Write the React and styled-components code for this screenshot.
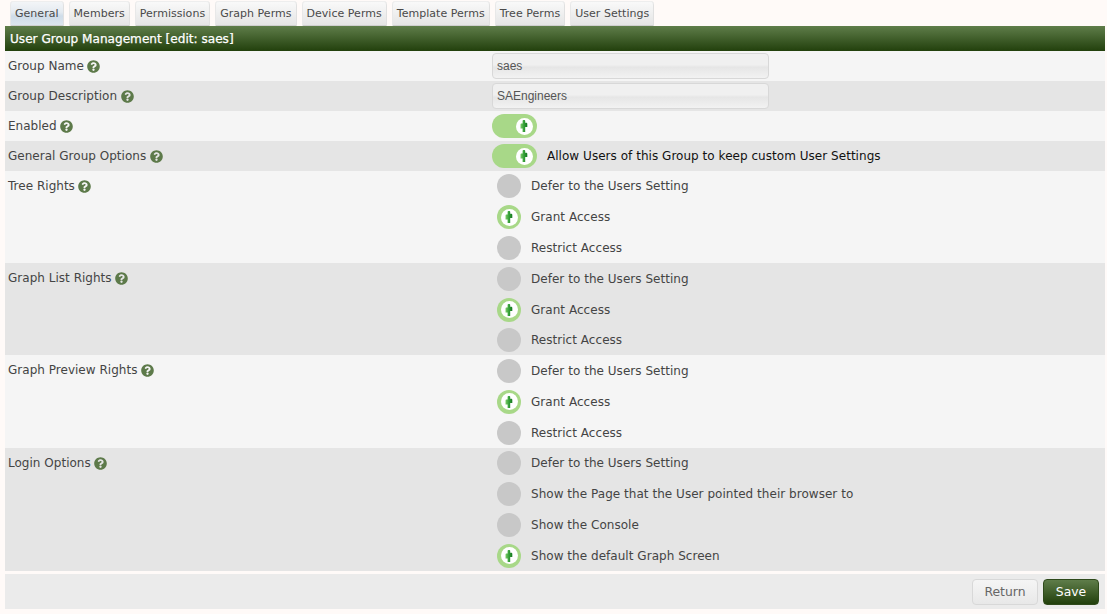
import React from "react";
import styled, { createGlobalStyle } from "styled-components";
import { FaQuestionCircle } from "react-icons/fa";

const Global = createGlobalStyle`
  html, body { margin: 0; padding: 0; background: #fffaf8; }
  body { font-family: Verdana, "DejaVu Sans", sans-serif; font-size: 12px; color: #444; }
`;

const Page = styled.div`
  width: 1100px;
  height: 614px;
  padding-left: 5px;
`;

const Tabs = styled.nav`
  display: flex;
  gap: 5px;
  height: 26px;
  padding-left: 5px;
  align-items: flex-end;
`;

const Tab = styled.div`
  height: 25px;
  box-sizing: border-box;
  padding: 0 5px;
  display: flex;
  align-items: center;
  font-size: 11px;
  letter-spacing: 0.03px;
  color: #4a4a4a;
  border-radius: 4px 4px 0 0;
  box-shadow: inset 0 1px 0 #eee, inset 1px 0 0 #e8e8e8, inset -1px 0 0 #e0e0e0, inset 0 -1px 0 #cfcfcf;
  background: ${(p) =>
    p.$active
      ? "linear-gradient(to bottom, #f4f6f8 0%, #e4eaf0 45%, #cfdce8 60%, #dde6ee 100%)"
      : "linear-gradient(to bottom, #fafafa 0%, #e4e4e4 100%)"};
`;

const Heading = styled.div`
  height: 25px;
  display: flex;
  align-items: center;
  padding-left: 5px;
  color: #fff;
  font-size: 12.1px;
  -webkit-text-stroke: 0.25px #fff;
  background: linear-gradient(to bottom, #5f7d4a 0%, #22400c 100%);
`;

const Row = styled.div`
  display: grid;
  grid-template-columns: 487px 1fr;
  height: ${(p) => p.$height || 30}px;
  background: ${(p) => (p.$alt ? "#e5e5e5" : "#f5f5f5")};
`;

const Label = styled.div`
  display: flex;
  align-items: center;
  align-self: start;
  gap: 3.5px;
  height: 30px;
  padding-left: 3px;
  letter-spacing: 0.02px;
  color: #444;
`;

const HelpIcon = styled(FaQuestionCircle)`
  width: 13px;
  height: 13px;
  flex: none;
  color: #5d7a4a;
`;

const Field = styled.div`
  display: flex;
  align-items: center;
  gap: 10px;
  height: 30px;
`;

const Text = styled.div`
  box-sizing: border-box;
  width: 277px;
  height: 26px;
  padding-left: 4px;
  display: flex;
  align-items: center;
  color: #555;
  font-family: "Liberation Sans", Arial, sans-serif;
  font-size: 12px;
  border: 1px solid #d8d8d8;
  border-radius: 4px;
  background: linear-gradient(to bottom, #f0f0f0 0 45%, #e6e6e6 55%, #f2f2f2 100%);
`;

const Switch = styled.div`
  width: 45px;
  height: 24px;
  border-radius: 12px;
  background: #a8d888;
  display: flex;
  align-items: center;
  justify-content: flex-end;
  padding-right: 4px;
  box-sizing: border-box;
`;

const Knob = styled.div`
  width: 17px;
  height: 17px;
  border-radius: 50%;
  background: #fff;
  display: flex;
  align-items: center;
  justify-content: center;
`;

const Options = styled.div`
  display: flex;
  flex-direction: column;
  padding-top: ${(p) => p.$nudge}px;
`;

const Option = styled.div`
  height: 30.75px;
  flex: none;
  display: flex;
  align-items: center;
  gap: 10px;
  padding-left: 5px;
`;

const Radio = styled.div`
  width: 24px;
  height: 24px;
  border-radius: 50%;
  background: ${(p) => (p.$on ? "#a8d888" : "#c8c8c8")};
  display: flex;
  align-items: center;
  justify-content: center;
`;

const Caption = styled.span`
  color: ${(p) => (p.$dark ? "#111" : "#444")};
  letter-spacing: 0.035px;
  white-space: nowrap;
`;

const Footer = styled.div`
  margin-top: 3px;
  height: 35px;
  background: #ebebeb;
  display: flex;
  justify-content: flex-end;
  align-items: center;
  gap: 5px;
  padding-right: 6px;
`;

const Button = styled.button`
  box-sizing: border-box;
  width: ${(p) => (p.$primary ? "56px" : "66px")};
  height: 26px;
  padding: 0;
  font: inherit;
  font-size: 12.4px;
  border-radius: 4px;
  border: 1px solid ${(p) => (p.$primary ? "#2f4a1b" : "#d8d8d8")};
  color: ${(p) => (p.$primary ? "#fff" : "#666")};
  background: ${(p) =>
    p.$primary
      ? "linear-gradient(to bottom, #5f7d4a 0%, #22400c 100%)"
      : "linear-gradient(to bottom, #f5f5f5 0%, #e8e8e8 100%)"};
`;

const CactusSvg = styled.svg`
  flex: none;
  margin-right: 1px;
`;

const Cactus = () => (
  <CactusSvg width="8" height="12" viewBox="0 0 8 12">
    <defs>
      <linearGradient id="cactusFill" x1="0" y1="0" x2="1" y2="0">
        <stop offset="0" stopColor="#7ccc68" />
        <stop offset="0.5" stopColor="#35a038" />
        <stop offset="1" stopColor="#147a20" />
      </linearGradient>
    </defs>
    <path
      d="M2.6 1C2.6.4 3.1 0 3.9 0s1.3.4 1.3 1v1.8h1.2c.5 0 .9.4.9.9V7H5.2v5H2.6V8.4H.5V4.4c0-.5.4-.9.9-.9h1.2z"
      fill="url(#cactusFill)"
    />
  </CactusSvg>
);

const tabs = ["General", "Members", "Permissions", "Graph Perms", "Device Perms", "Template Perms", "Tree Perms", "User Settings"];
const rights = ["Defer to the Users Setting", "Grant Access", "Restrict Access"];
const groups = [
  { label: "Tree Rights", options: rights, on: 1, alt: false, height: 92, nudge: 0 },
  { label: "Graph List Rights", options: rights, on: 1, alt: true, height: 92, nudge: 0.5 },
  { label: "Graph Preview Rights", options: rights, on: 1, alt: false, height: 93, nudge: 0.75 },
  {
    label: "Login Options",
    options: ["Defer to the Users Setting", "Show the Page that the User pointed their browser to", "Show the Console", "Show the default Graph Screen"],
    on: 3,
    alt: true,
    height: 123,
    nudge: 0,
  },
];

const LabelCell = ({ children }) => (
  <Label>
    {children}
    <HelpIcon />
  </Label>
);

const Toggle = () => (
  <Switch>
    <Knob>
      <Cactus />
    </Knob>
  </Switch>
);

export default function App() {
  return (
    <Page>
      <Global />
      <Tabs>
        {tabs.map((t, i) => (
          <Tab key={t} $active={i === 0}>{t}</Tab>
        ))}
      </Tabs>
      <Heading>User Group Management [edit: saes]</Heading>
      <Row>
        <LabelCell>Group Name</LabelCell>
        <Field><Text>saes</Text></Field>
      </Row>
      <Row $alt>
        <LabelCell>Group Description</LabelCell>
        <Field><Text>SAEngineers</Text></Field>
      </Row>
      <Row>
        <LabelCell>Enabled</LabelCell>
        <Field><Toggle /></Field>
      </Row>
      <Row $alt>
        <LabelCell>General Group Options</LabelCell>
        <Field><Toggle /><Caption $dark>Allow Users of this Group to keep custom User Settings</Caption></Field>
      </Row>
      {groups.map((g) => (
        <Row key={g.label} $alt={g.alt} $height={g.height}>
          <LabelCell>{g.label}</LabelCell>
          <Options $nudge={g.nudge}>
            {g.options.map((o, i) => (
              <Option key={o}>
                <Radio $on={i === g.on}>
                  {i === g.on && <Knob><Cactus /></Knob>}
                </Radio>
                <Caption>{o}</Caption>
              </Option>
            ))}
          </Options>
        </Row>
      ))}
      <Footer>
        <Button>Return</Button>
        <Button $primary>Save</Button>
      </Footer>
    </Page>
  );
}
